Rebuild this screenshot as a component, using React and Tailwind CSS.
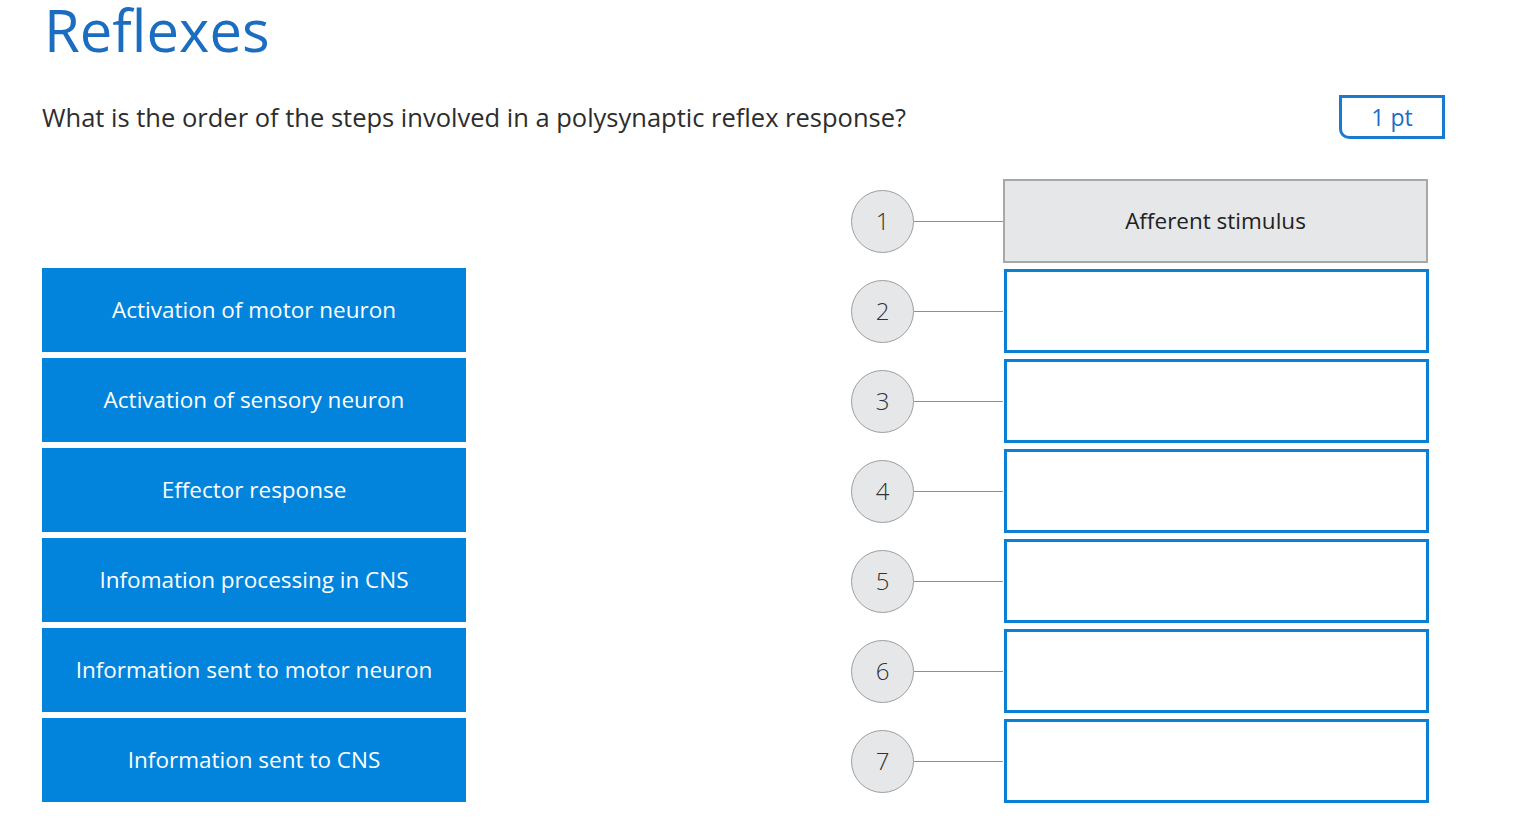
import React from "react";

const items = [
  "Activation of motor neuron",
  "Activation of sensory neuron",
  "Effector response",
  "Infomation processing in CNS",
  "Information sent to motor neuron",
  "Information sent to CNS",
];

export default function App() {
  return (
    <div
      className="w-[1524px] h-[823px] bg-white overflow-hidden pl-[42px]"
      style={{ fontFamily: '"Open Sans", "Noto Sans", sans-serif' }}
    >
      <div className="ml-[2px] -mt-[10px] text-[58px] leading-[80px] text-[#1a6dbf]">Reflexes</div>
      <div className="mt-[25px] flex items-center justify-between h-[44px] pr-[79px]">
        <div className="text-[25.5px] text-[#2d2d2d] leading-[36px]">
          What is the order of the steps involved in a polysynaptic reflex response?
        </div>
        <div className="w-[106px] h-[44px] border-[3px] border-[#1a7ad0] rounded-bl-[10px] flex items-center justify-center text-[23px] text-[#1a6fc8] leading-none">
          1 pt
        </div>
      </div>
      <div className="mt-[40px] flex">
        <div className="w-[424px] pt-[89px] flex flex-col gap-[6px]">
          {items.map((t) => (
            <div
              key={t}
              className="h-[84px] bg-[#0284dc] text-white text-[22.5px] flex items-center justify-center"
            >
              {t}
            </div>
          ))}
        </div>
        <div className="ml-[385px] flex flex-col gap-[6px]">
          {[1, 2, 3, 4, 5, 6, 7].map((n) => (
            <div key={n} className="h-[84px] flex items-center">
              <div className="w-[63px] h-[63px] rounded-full border border-[#9e9e9e] bg-[#e6e7e8] flex items-center justify-center text-[24px] font-light text-[#333]">
                {n}
              </div>
              <div className="w-[89px] h-px bg-[#8f8f8f]" />
              {n === 1 ? (
                <div className="w-[425px] h-[84px] bg-[#e6e7e8] border-2 border-[#a8a8a8] flex items-center justify-center text-[22.5px] text-[#222]">
                  Afferent stimulus
                </div>
              ) : (
                <div className="ml-px w-[425px] h-[84px] bg-white border-[3px] border-[#0a7fd4]" />
              )}
            </div>
          ))}
        </div>
      </div>
    </div>
  );
}
